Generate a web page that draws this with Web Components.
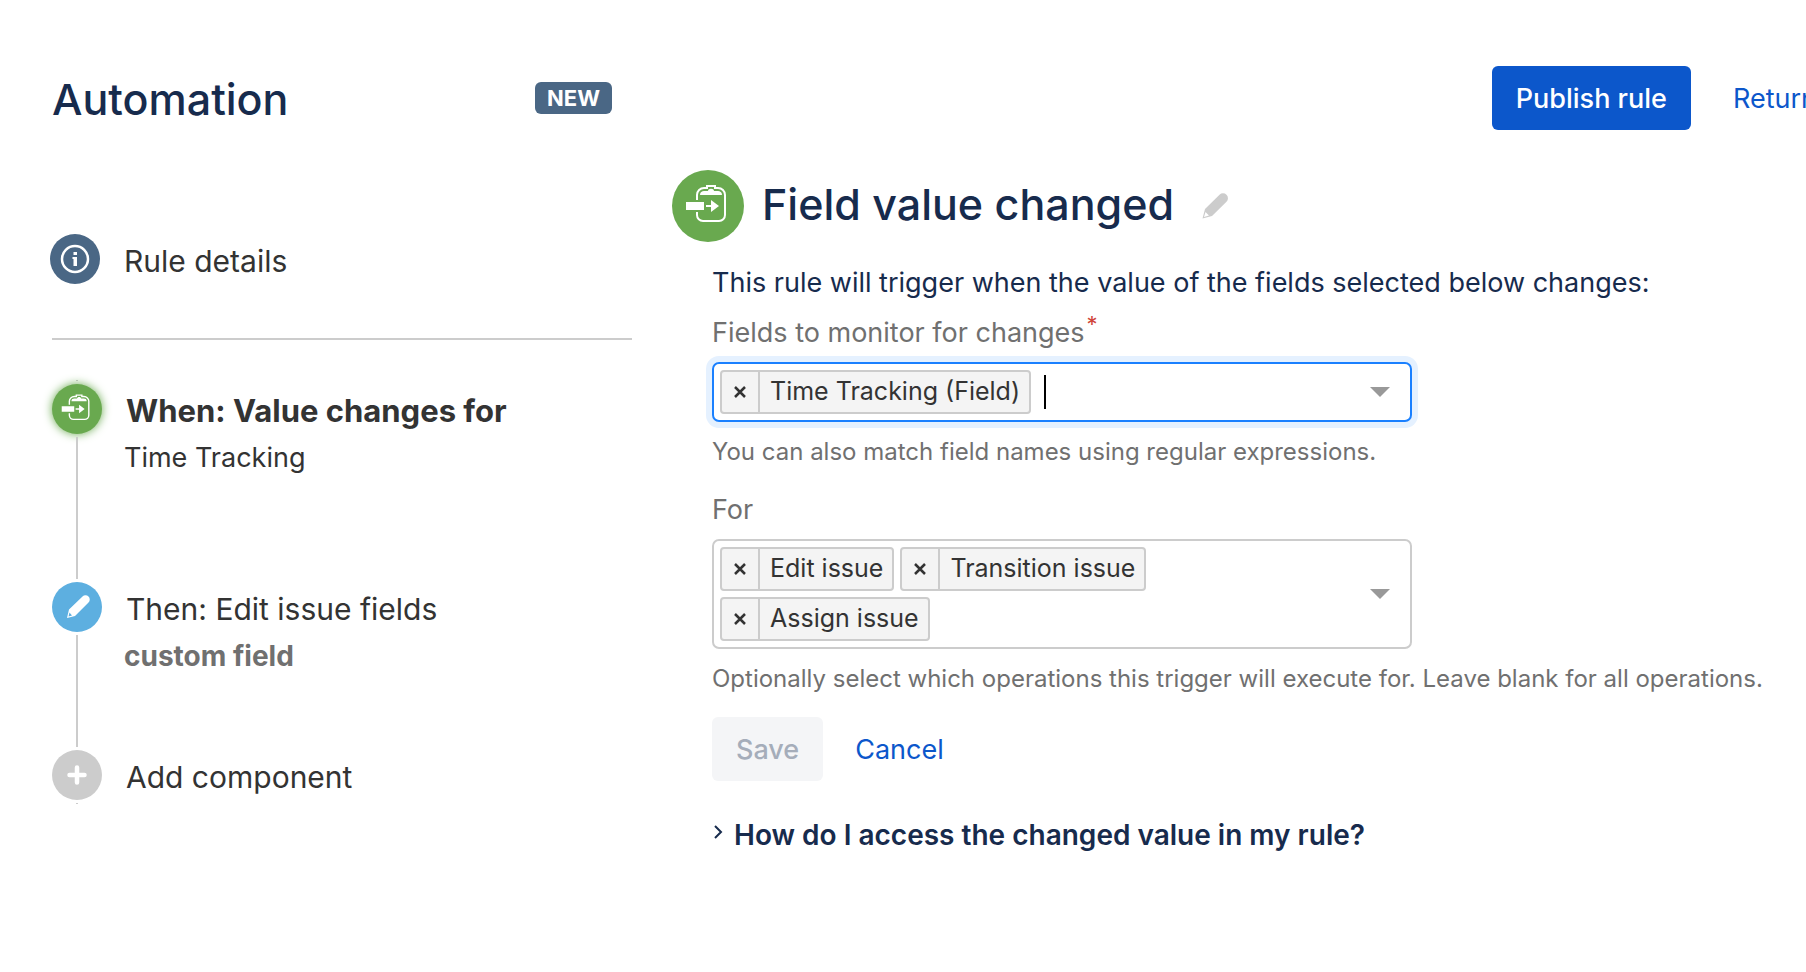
<!DOCTYPE html>
<html lang="en">
<head>
<meta charset="utf-8">
<title>Automation</title>
<meta name="viewport" content="width=device-width, initial-scale=1">
<style>
  body {
    margin: 0;
    background: #fff;
    overflow-x: hidden;
    font-family: Inter, "Liberation Sans", sans-serif;
    --navy: #172b4d;
    --text: #333;
    --muted: #707070;
    --line: #ccc;
    --blue: #0c57cb;
    --size-title: 43px;
    --size-step: 30px;
    --size-body: 27px;
    --size-tag: 25px;
    --size-help: 24px;
  }
</style>
</head>
<body>
<automation-app></automation-app>

<script>
const define = (name, html, setup) => {
  const template = document.createElement('template');
  template.innerHTML = html;
  customElements.define(name, class extends HTMLElement {
    constructor() {
      super();
      this.attachShadow({ mode: 'open' });
    }
    connectedCallback() {
      if (this.shadowRoot.childNodes.length) return;
      this.shadowRoot.append(template.content.cloneNode(true));
      if (setup) setup(this, this.shadowRoot);
    }
  });
};

const glyphs = {
  field: `<svg viewBox="0 0 72 72" fill="none" stroke="#fff" stroke-width="2">
    <path d="M25 30V25a7 7 0 0 1 7-7H35V16H43V18H46a7 7 0 0 1 7 7V45a6 6 0 0 1-6 6H31a6 6 0 0 1-6-6V42"/>
    <path fill="#fff" stroke="none" d="M28 25c0-3 2-4 4-4h4c0-3 6-3 6 0h4c2 0 4 1 4 4zM14 32h18v8H14zM34 35h5v-5l8 6-8 6v-5h-5z"/></svg>`,
  pencil: `<svg viewBox="0 0 50 50"><path fill="#fff" fill-rule="evenodd" d="M17 27.500L30.500 14.500a4.200 4.200 0 0 1 6 6L23 34l-8 2zM17.500 30.500l-1 4 3.500-1z"/></svg>`,
  plus: `<svg viewBox="0 0 50 50"><path d="M25 17.500v15M17.500 25h15" stroke="#fff" stroke-width="4.500" stroke-linecap="round"/></svg>`,
  info: `<svg viewBox="0 0 50 50"><circle cx="25" cy="25" r="13" fill="none" stroke="#fff" stroke-width="2.500"/><path fill="#fff" d="M23.500 18h3.500v3h-3.500zM22.500 23H27v9h-3.500v-7h-1z"/></svg>`
};

define('round-icon', `
  <style>
    :host { display: block; flex: none; width: var(--d, 50px); height: var(--d, 50px); border-radius: 50%; background: var(--fill, #ccc); }
    svg { display: block; width: 100%; height: 100%; }
  </style>`,
  (host, root) => root.append(document.createRange().createContextualFragment(glyphs[host.getAttribute('name')])));

define('rule-step', `
  <style>
    :host { display: grid; grid-template-columns: 50px 1fr; column-gap: 22px; color: var(--text); padding-left: 2px; }
    .rail { display: flex; flex-direction: column; align-items: center; gap: 3px; padding-bottom: 3px; }
    .rail::after { content: ""; flex: 1; width: 2px; min-height: 1px; background: var(--line); }
    :host([active]) round-icon { box-shadow: 0 0 10px #69a94f; }
    a { color: inherit; text-decoration: none; display: block; padding: 4px 0 var(--after, 100px); }
    .name { display: block; padding-left: 2px; font-size: var(--size-step); line-height: 46px; }
    :host([active]) .name { font-weight: 700; font-size: 31px; }
    .sub { display: flex; font-size: var(--size-body); line-height: 48px; }
    ::slotted(strong) { font-size: 28px; color: var(--muted); }
  </style>
  <div class="rail"><round-icon></round-icon></div>
  <a href="#"><span class="name"><slot></slot></span><span class="sub"><slot name="sub"></slot></span></a>`,
  (host, root) => {
    const old = root.querySelector('round-icon');
    const icon = document.createElement('round-icon');
    icon.setAttribute('name', host.getAttribute('icon'));
    old.replaceWith(icon);
    if (!host.querySelector('[slot=sub]')) root.querySelector('.sub').remove();
  });

define('rule-sidebar', `
  <style>
    :host { display: block; padding-top: 104px; }
    .details { display: flex; align-items: center; gap: 24px; height: 50px; color: var(--text); text-decoration: none; font-size: var(--size-step); }
    .details round-icon { --fill: #4a6785; }
    .details span { padding-top: 3px; }
    hr { border: 0; height: 2px; background: var(--line); margin: 54px 0 40px 2px; }
    .cap { width: 2px; height: 1px; background: var(--line); margin: 0 0 3px 26px; }
    .when { --fill: #69a94f; }
    .then { --fill: #5dafe0; --after: 70px; }
    .add { --fill: #ccc; --after: 7px; }
  </style>
  <a class="details" href="#"><round-icon name="info"></round-icon><span>Rule details</span></a>
  <hr>
  <div class="cap"></div>
  <rule-step class="when" icon="field" active>When: Value changes for<span slot="sub">Time Tracking</span></rule-step>
  <rule-step class="then" icon="pencil">Then: Edit issue fields<strong slot="sub">custom field</strong></rule-step>
  <rule-step class="add" icon="plus">Add component</rule-step>`);

define('app-button', `
  <style>
    :host { display: inline-block; }
    button { height: 64px; border: 0; border-radius: 6px; padding: 0 24px; background: var(--blue); color: #fff; font: 500 var(--size-body) Inter, "Liberation Sans", sans-serif; white-space: nowrap; cursor: pointer; }
    button:disabled { background: #f4f5f7; color: #a5adba; cursor: default; }
  </style>
  <button type="button"><slot></slot></button>`,
  (host, root) => { root.querySelector('button').disabled = host.hasAttribute('disabled'); });

define('app-header', `
  <style>
    :host { display: flex; align-items: center; padding: 66px 0 0 50px; color: var(--navy); }
    .brand { display: flex; align-items: center; justify-content: space-between; flex: none; width: 562px; }
    h1 { margin: 0; padding: 2px 0 0 2px; font-size: var(--size-title); font-weight: 500; line-height: 52px; }
    .badge { height: 32px; padding: 0 12px; border-radius: 6px; background: #4a6785; color: #fff; font-size: 22px; line-height: 32px; font-weight: 700; }
    .actions { display: flex; align-items: center; gap: 42px; margin: 0 -11px 0 auto; }
    a { color: var(--blue); font-size: var(--size-body); text-decoration: none; white-space: nowrap; }
  </style>
  <div class="brand"><h1>Automation</h1><span class="badge">NEW</span></div>
  <div class="actions"><app-button>Publish rule</app-button><a href="#">Return</a></div>`);

define('field-tag', `
  <style>
    :host { display: flex; box-sizing: border-box; height: 44px; border: 2px solid var(--line); border-radius: 4px; background: #f4f4f4; color: var(--text); font-size: var(--size-tag); line-height: 38px; white-space: nowrap; }
    button { width: 38px; border: 0; border-right: 2px solid var(--line); background: none; padding: 0; display: grid; place-items: center; cursor: pointer; }
    svg { width: 12px; height: 12px; }
    span { padding: 0 9px 0 10px; }
  </style>
  <button type="button" aria-label="Remove"><svg viewBox="0 0 12 12"><path d="M1 1l10 10M11 1l-10 10" stroke="#333" stroke-width="2.500"/></svg></button>
  <span><slot></slot></span>`);

define('tag-field', `
  <style>
    :host { display: block; color: var(--muted); }
    label { display: block; font-size: var(--size-body); line-height: 40px; }
    sup { display: none; color: #d04437; font-size: 22px; line-height: 0; vertical-align: 10px; padding-left: 2px; }
    :host([required]) sup { display: inline; }
    .box { display: flex; align-items: center; box-sizing: border-box; max-width: 700px; margin-top: 9px; padding: 6px 20px 6px 6px; border: 2px solid var(--line); border-radius: 7px; background: #fff; }
    :host([active]) .box { border-color: #1a80ff; box-shadow: 0 0 0 6px #e5f1ff; }
    .tags { display: flex; flex-wrap: wrap; align-items: center; gap: 6px; flex: 1; min-width: 0; }
    .entry { display: flex; align-items: center; flex: 1 1 20px; height: 34px; padding-left: 7px; }
    :host([active]) .entry::before { content: ""; width: 2px; height: 34px; background: #000; }
    input { flex: 1; min-width: 0; width: 10px; border: 0; padding: 0; outline: 0; background: none; color: var(--text); font: var(--size-tag) Inter, sans-serif; }
    .arrow { width: 20px; height: 10px; margin-left: 16px; background: #999; clip-path: polygon(0 0, 100% 0, 50% 100%); }
    p { margin: 14px 0 0; font-size: var(--size-help); line-height: 32px; }
  </style>
  <label for="entry"><span class="label"></span><sup>*</sup></label>
  <div class="box">
    <div class="tags"><slot></slot><div class="entry"><input id="entry" type="text" autocomplete="off"></div></div>
    <div class="arrow"></div>
  </div>
  <p></p>`,
  (host, root) => {
    root.querySelector('.label').textContent = host.getAttribute('label');
    root.querySelector('p').textContent = host.getAttribute('help');
  });

define('trigger-editor', `
  <style>
    :host { display: block; padding-top: 40px; color: var(--navy); }
    header { display: flex; align-items: center; }
    header round-icon { --d: 72px; --fill: #69a94f; margin-right: 18px; }
    h2 { margin: 0; padding-bottom: 5px; font-size: var(--size-title); font-weight: 500; line-height: 52px; }
    .edit { border: 0; background: none; padding: 0; margin-left: 28px; width: 26px; height: 26px; }
    .edit svg { display: block; }
    form { margin: 21px 0 0 40px; }
    .intro { margin: 0 0 10px; font-size: var(--size-body); line-height: 40px; }
    tag-field { margin-bottom: 22px; }
    .buttons { display: flex; align-items: center; gap: 32px; }
    .buttons a { color: var(--blue); text-decoration: none; font-size: var(--size-body); }
    details { margin-top: 34px; }
    summary { display: flex; align-items: center; gap: 10px; list-style: none; font-size: 28px; font-weight: 600; line-height: 40px; cursor: pointer; }
    summary svg { margin: 0 1px 6px 1px; }
  </style>
  <header>
    <round-icon name="field"></round-icon>
    <h2>Field value changed</h2>
    <button class="edit" type="button" aria-label="Rename"><svg width="26" height="26" viewBox="0 0 26 26"><path fill="#ccc" fill-rule="evenodd" d="M3 16L17.500 1.800a4.700 4.700 0 0 1 7 7L10 23 .500 25.500zM3.500 19l-1.500 5 5-1.500z"/></svg></button>
  </header>
  <form>
    <p class="intro">This rule will trigger when the value of the fields selected below changes:</p>
    <tag-field label="Fields to monitor for changes" help="You can also match field names using regular expressions." required active>
      <field-tag>Time Tracking (Field)</field-tag>
    </tag-field>
    <tag-field label="For" help="Optionally select which operations this trigger will execute for. Leave blank for all operations.">
      <field-tag>Edit issue</field-tag>
      <field-tag>Transition issue</field-tag>
      <field-tag>Assign issue</field-tag>
    </tag-field>
    <div class="buttons"><app-button disabled>Save</app-button><a href="#">Cancel</a></div>
    <details><summary><svg width="10" height="16" viewBox="0 0 10 16"><path d="M2 2l6 6-6 6" fill="none" stroke="#172b4d" stroke-width="2"/></svg>How do I access the changed value in my rule?</summary></details>
  </form>`);

define('automation-app', `
  <style>
    :host { display: block; }
    main { display: grid; grid-template-columns: 582px minmax(0, 1fr); column-gap: 40px; padding: 0 24px 40px 50px; }
  </style>
  <app-header></app-header>
  <main><rule-sidebar></rule-sidebar><trigger-editor></trigger-editor></main>`);
</script>
</body>
</html>
